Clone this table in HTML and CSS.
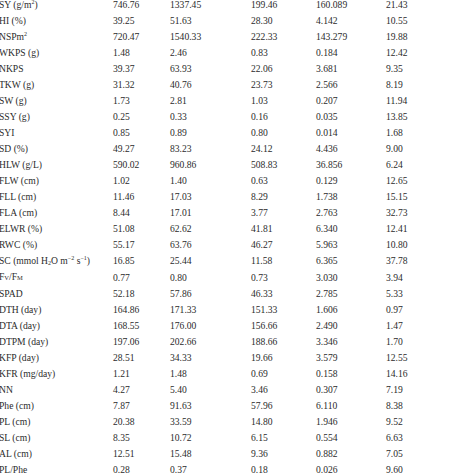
FILE: index.html
```html
<!DOCTYPE html>
<html>
<head>
<meta charset="utf-8">
<link rel="stylesheet" href="styles.css">
</head>
<body>
<table class="data">
<tbody>
<tr><td>SY (g/m<sup>2</sup>)</td><td>746.76</td><td>1337.45</td><td>199.46</td><td>160.089</td><td>21.43</td></tr>
<tr><td>HI (%)</td><td>39.25</td><td>51.63</td><td>28.30</td><td>4.142</td><td>10.55</td></tr>
<tr><td>NSPm<sup>2</sup></td><td>720.47</td><td>1540.33</td><td>222.33</td><td>143.279</td><td>19.88</td></tr>
<tr><td>WKPS (g)</td><td>1.48</td><td>2.46</td><td>0.83</td><td>0.184</td><td>12.42</td></tr>
<tr><td>NKPS</td><td>39.37</td><td>63.93</td><td>22.06</td><td>3.681</td><td>9.35</td></tr>
<tr><td>TKW (g)</td><td>31.32</td><td>40.76</td><td>23.73</td><td>2.566</td><td>8.19</td></tr>
<tr><td>SW (g)</td><td>1.73</td><td>2.81</td><td>1.03</td><td>0.207</td><td>11.94</td></tr>
<tr><td>SSY (g)</td><td>0.25</td><td>0.33</td><td>0.16</td><td>0.035</td><td>13.85</td></tr>
<tr><td>SYI</td><td>0.85</td><td>0.89</td><td>0.80</td><td>0.014</td><td>1.68</td></tr>
<tr><td>SD (%)</td><td>49.27</td><td>83.23</td><td>24.12</td><td>4.436</td><td>9.00</td></tr>
<tr><td>HLW (g/L)</td><td>590.02</td><td>960.86</td><td>508.83</td><td>36.856</td><td>6.24</td></tr>
<tr><td>FLW (cm)</td><td>1.02</td><td>1.40</td><td>0.63</td><td>0.129</td><td>12.65</td></tr>
<tr><td>FLL (cm)</td><td>11.46</td><td>17.03</td><td>8.29</td><td>1.738</td><td>15.15</td></tr>
<tr><td>FLA (cm)</td><td>8.44</td><td>17.01</td><td>3.77</td><td>2.763</td><td>32.73</td></tr>
<tr><td>ELWR (%)</td><td>51.08</td><td>62.62</td><td>41.81</td><td>6.340</td><td>12.41</td></tr>
<tr><td>RWC (%)</td><td>55.17</td><td>63.76</td><td>46.27</td><td>5.963</td><td>10.80</td></tr>
<tr><td>SC (mmol H<sub>2</sub>O m<sup>&minus;2</sup> s<sup>&minus;1</sup>)</td><td>16.85</td><td>25.44</td><td>11.58</td><td>6.365</td><td>37.78</td></tr>
<tr><td>F<span class="sc">V</span>/F<span class="sc">M</span></td><td>0.77</td><td>0.80</td><td>0.73</td><td>3.030</td><td>3.94</td></tr>
<tr><td>SPAD</td><td>52.18</td><td>57.86</td><td>46.33</td><td>2.785</td><td>5.33</td></tr>
<tr><td>DTH (day)</td><td>164.86</td><td>171.33</td><td>151.33</td><td>1.606</td><td>0.97</td></tr>
<tr><td>DTA (day)</td><td>168.55</td><td>176.00</td><td>156.66</td><td>2.490</td><td>1.47</td></tr>
<tr><td>DTPM (day)</td><td>197.06</td><td>202.66</td><td>188.66</td><td>3.346</td><td>1.70</td></tr>
<tr><td>KFP (day)</td><td>28.51</td><td>34.33</td><td>19.66</td><td>3.579</td><td>12.55</td></tr>
<tr><td>KFR (mg/day)</td><td>1.21</td><td>1.48</td><td>0.69</td><td>0.158</td><td>14.16</td></tr>
<tr><td>NN</td><td>4.27</td><td>5.40</td><td>3.46</td><td>0.307</td><td>7.19</td></tr>
<tr><td>Phe (cm)</td><td>7.87</td><td>91.63</td><td>57.96</td><td>6.110</td><td>8.38</td></tr>
<tr><td>PL (cm)</td><td>20.38</td><td>33.59</td><td>14.80</td><td>1.946</td><td>9.52</td></tr>
<tr><td>SL (cm)</td><td>8.35</td><td>10.72</td><td>6.15</td><td>0.554</td><td>6.63</td></tr>
<tr><td>AL (cm)</td><td>12.51</td><td>15.48</td><td>9.36</td><td>0.882</td><td>7.05</td></tr>
<tr><td>PL/Phe</td><td>0.28</td><td>0.37</td><td>0.18</td><td>0.026</td><td>9.60</td></tr>
</tbody>
</table>
</body>
</html>
```
FILE: styles.css
```css
html, body {
  margin: 0;
  padding: 0;
  background: #ffffff;
  overflow: hidden;
}
body {
  font-family: "Liberation Serif", "Times New Roman", serif;
  font-size: 9.6px;
  color: #2b2b2b;
}
.data {
  border-collapse: collapse;
  table-layout: fixed;
  width: 474px;
  margin-top: -3px;
  margin-left: -1px;
}
.data td {
  padding: 0;
  height: 16px;
  line-height: 16px;
  white-space: nowrap;
  vertical-align: middle;
}
.data td:nth-child(1) { width: 114px; }
.data td:nth-child(2) { width: 57px; }
.data td:nth-child(3) { width: 81px; }
.data td:nth-child(4) { width: 65px; }
.data td:nth-child(5) { width: 70px; }
.data sup, .data sub {
  font-size: 6px;
  line-height: 0;
}
.data sup { vertical-align: 4px; }
.data sub { vertical-align: -1px; }
.data .sc { font-size: 6.5px; }
```
